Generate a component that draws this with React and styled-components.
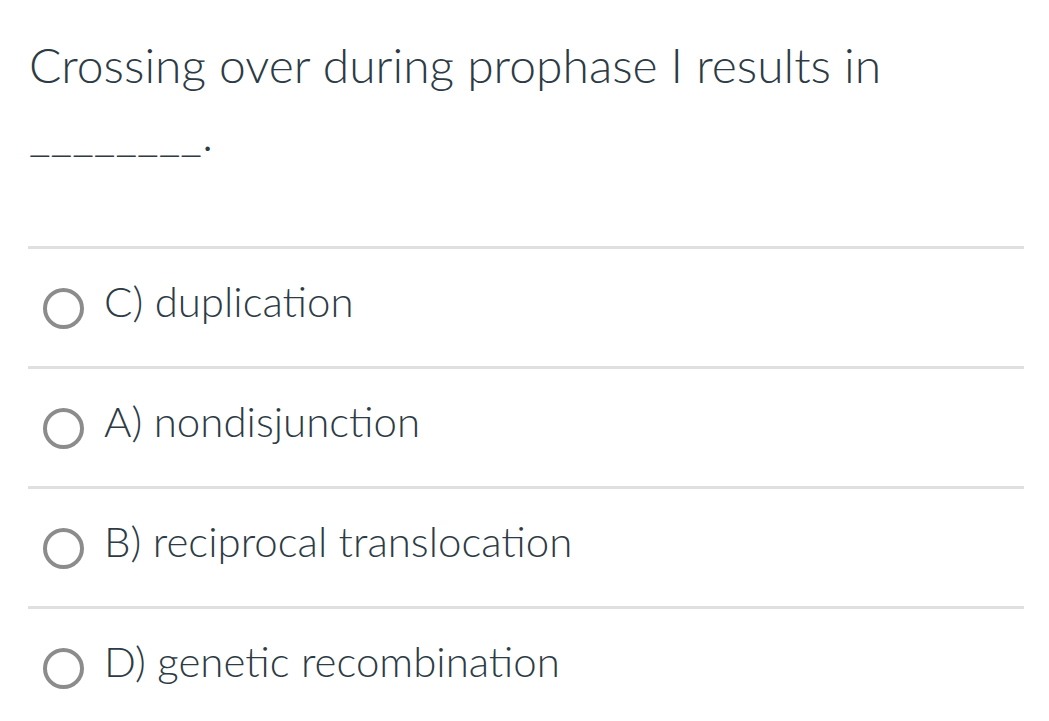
import React from 'react';
import styled, { createGlobalStyle } from 'styled-components';

const GlobalStyle = createGlobalStyle`
  html, body {
    margin: 0;
    padding: 0;
    background: #ffffff;
  }
  body {
    font-family: Lato, "Open Sans", sans-serif;
    color: #2d3b45;
  }
`;

const Page = styled.div`
  padding: 0 25px 0 28px;
  width: 996px;
`;

const Question = styled.div`
  font-size: 48px;
  font-weight: 300;
  line-height: 68px;
  padding: 31px 0 0 1px;
  margin-bottom: 79px;
  color: #2d3b45;
`;

const Options = styled.div`
  display: flex;
  flex-direction: column;
`;

const Option = styled.label`
  display: flex;
  align-items: center;
  gap: 20px;
  height: 120px;
  border-top: 3px solid #e0e0e0;
  box-sizing: border-box;
  padding-left: 15px;
  cursor: pointer;
`;

const Radio = styled.span`
  width: 41px;
  height: 41px;
  box-sizing: border-box;
  border-radius: 50%;
  border: 4px solid #8c8c8c;
  flex-shrink: 0;
  background: #fff;
  margin-top: 2px;
`;

const OptionText = styled.span`
  font-size: 42px;
  font-weight: 300;
  color: #2d3b45;
  margin-top: -13px;
`;

const answers = [
  'C) duplication',
  'A) nondisjunction',
  'B) reciprocal translocation',
  'D) genetic recombination'
];

export default function App() {
  return (
    <>
      <GlobalStyle />
      <Page>
        <Question>
          Crossing over during prophase I results in
          <br />
          ________.
        </Question>
        <Options>
          {answers.map((a) => (
            <Option key={a}>
              <Radio />
              <OptionText>{a}</OptionText>
            </Option>
          ))}
        </Options>
      </Page>
    </>
  );
}
